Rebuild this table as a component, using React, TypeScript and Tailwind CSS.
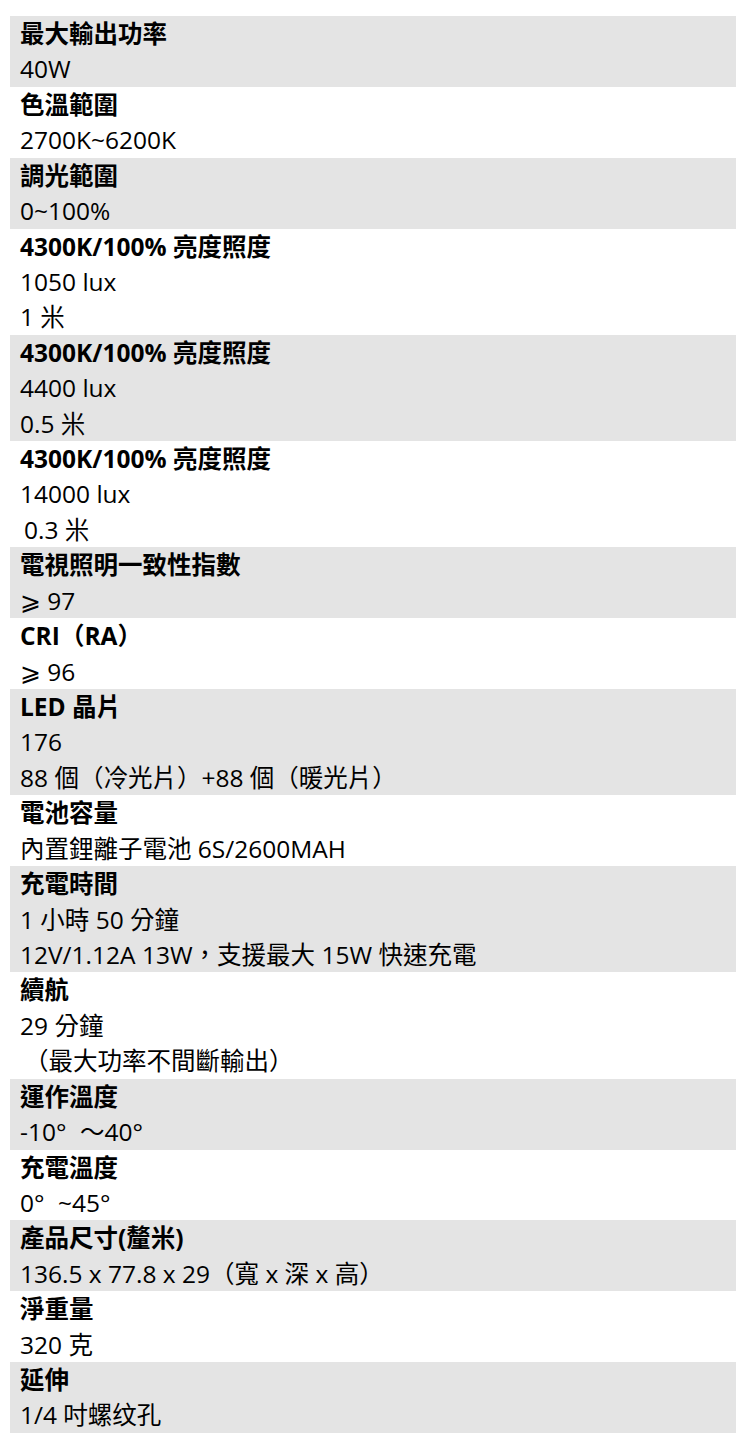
import React from 'react'

type Spec = { title: string; lines: React.ReactNode[] }

const deg = <span className="inline-block w-6">°</span>

const SPECS: Spec[] = [
  { title: '最大輸出功率', lines: ['40W'] },
  { title: '色溫範圍', lines: ['2700K~6200K'] },
  { title: '調光範圍', lines: ['0~100%'] },
  { title: '4300K/100% 亮度照度', lines: ['1050 lux', '1 米'] },
  { title: '4300K/100% 亮度照度', lines: ['4400 lux', '0.5 米'] },
  { title: '4300K/100% 亮度照度', lines: ['14000 lux', <span className="pl-1">0.3 米</span>] },
  { title: '電視照明一致性指數', lines: ['⩾ 97'] },
  { title: 'CRI（RA）', lines: ['⩾ 96'] },
  { title: 'LED 晶片', lines: ['176', '88 個（冷光片）+88 個（暖光片）'] },
  { title: '電池容量', lines: ['內置鋰離子電池 6S/2600MAH'] },
  { title: '充電時間', lines: ['1 小時 50 分鐘', '12V/1.12A 13W，支援最大 15W 快速充電'] },
  { title: '續航', lines: ['29 分鐘', <span className="pl-1">（最大功率不間斷輸出）</span>] },
  { title: '運作溫度', lines: [<>-10{deg}～40°</>] },
  { title: '充電溫度', lines: [<>0{deg}~45°</>] },
  { title: '產品尺寸(釐米)', lines: ['136.5 x 77.8 x 29（寬 x 深 x 高）'] },
  { title: '淨重量', lines: ['320 克'] },
  { title: '延伸', lines: ['1/4 吋螺纹孔'] },
]

export default function App() {
  return (
    <div className="min-h-[1450px] bg-white pt-4 pl-[10px] pr-[14px] font-['Open_Sans','Noto_Sans_CJK_TC',sans-serif] text-[24.5px] leading-[35.425px] text-black">
      {SPECS.map((spec, i) => (
        <div key={i} className={`pl-[10px] ${i % 2 === 0 ? 'bg-[#e4e4e4]' : 'bg-white'}`}>
          <div className="font-bold whitespace-pre">{spec.title}</div>
          {spec.lines.map((line, j) => (
            <div key={j} className="whitespace-pre">{line}</div>
          ))}
        </div>
      ))}
    </div>
  )
}
